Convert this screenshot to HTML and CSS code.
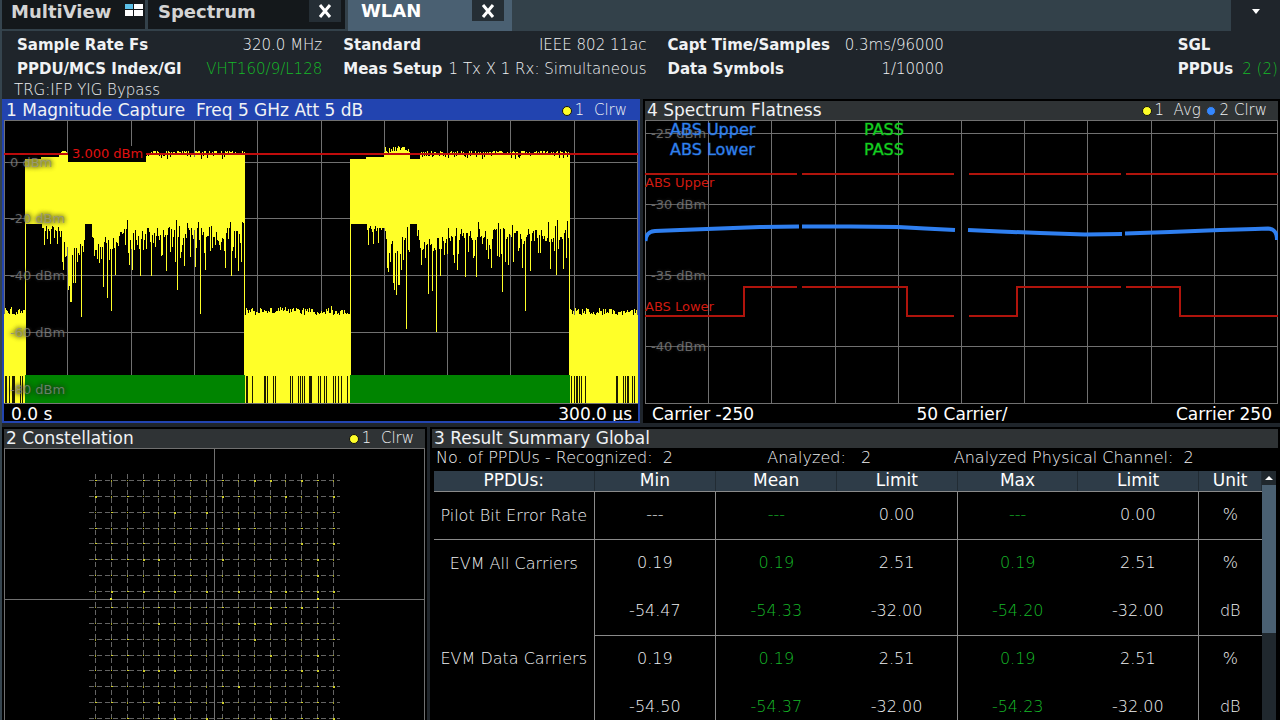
FILE: index.html
```html
<!DOCTYPE html>
<html lang="en">
<head>
<meta charset="utf-8">
<title>WLAN</title>
<link rel="stylesheet" href="styles.css">
</head>
<body>
<div class="app">
  <nav class="tabs" aria-label="Channels">
    <div class="tab tab-multi"><button class="tab-name">MultiView</button>
      <svg class="tiles" viewBox="0 0 18 12" aria-hidden="true"><path fill="#5cc0e8" d="M0 0h8v5H0z"/><path fill="#fff" d="M9 0h9v5H9zM0 6h8v6H0zM9 6h9v6H9z"/></svg>
    </div>
    <div class="tab tab-spectrum"><button class="tab-name">Spectrum</button><button class="close" aria-label="Close Spectrum"><svg viewBox="0 0 14 14"><path d="M2 1l10 12M12 1L2 13"/></svg></button></div>
    <div class="tab tab-wlan"><button class="tab-name">WLAN</button><button class="close" aria-label="Close WLAN"><svg viewBox="0 0 14 14"><path d="M2 1l10 12M12 1L2 13"/></svg></button></div>
    <button class="more" aria-label="More channels"><svg viewBox="0 0 8 5"><path d="M0 0h8L4 5z"/></svg></button>
  </nav>

  <header class="status">
    <div class="params">
      <div class="param"><b>Sample Rate Fs</b><span>320.0 MHz</span></div>
      <div class="param"><b>Standard</b><span>IEEE 802 11ac</span></div>
      <div class="param"><b>Capt Time/Samples</b><span>0.3ms/96000</span></div>
      <div class="param last"><b>SGL</b></div>
      <div class="param"><b>PPDU/MCS Index/GI</b><span class="ok">VHT160/9/L128</span></div>
      <div class="param"><b>Meas Setup</b><span>1 Tx X 1 Rx: Simultaneous</span></div>
      <div class="param"><b>Data Symbols</b><span>1/10000</span></div>
      <div class="param last"><b>PPDUs</b><span class="ok">2 (2)</span></div>
    </div>
    <div class="trigger">TRG:IFP YIG Bypass</div>
  </header>

  <main class="windows">
    <div class="row row-top">
      <section class="panel active">
        <header class="head"><h2>1 Magnitude Capture&nbsp; Freq 5 GHz Att 5 dB</h2><div class="trace"><i class="dot"></i>1&nbsp; Clrw</div></header>
        <div class="plot" id="magnitude">
          <svg viewBox="4 120 634 284" preserveAspectRatio="none" id="mag-svg"></svg>
          <span class="level">3.000 dBm</span>
          <span class="tick t0">0 dBm</span><span class="tick t20">-20 dBm</span><span class="tick t40">-40 dBm</span><span class="tick t60">-60 dBm</span><span class="tick t80">-80 dBm</span>
        </div>
        <footer class="axis"><span>0.0 s</span><span>300.0 µs</span></footer>
      </section>
      <section class="panel">
        <header class="head"><h2>4 Spectrum Flatness</h2><div class="trace"><i class="dot"></i>1&nbsp; Avg <i class="dot blue"></i>2 Clrw</div></header>
        <div class="plot">
          <svg viewBox="645 120 633 284" preserveAspectRatio="none" id="flat-svg"></svg>
          <span class="tick f25">-25 dBm</span><span class="tick f30">-30 dBm</span><span class="tick f35">-35 dBm</span><span class="tick f40">-40 dBm</span>
          <span class="limit upper">ABS Upper</span><span class="limit lower">ABS Lower</span>
          <div class="checks"><span>ABS Upper</span><span class="pass">PASS</span><span>ABS Lower</span><span class="pass">PASS</span></div>
        </div>
        <footer class="axis"><span>Carrier -250</span><span>50 Carrier/</span><span>Carrier 250</span></footer>
      </section>
    </div>

    <div class="row row-bottom">
      <section class="panel">
        <header class="head"><h2>2 Constellation</h2><div class="trace"><i class="dot"></i>1&nbsp; Clrw</div></header>
        <div class="plot fill"><svg viewBox="4 448 421 272" preserveAspectRatio="none" id="const-svg"></svg></div>
      </section>
      <section class="panel">
        <header class="head"><h2>3 Result Summary Global</h2></header>
        <div class="counts"><span>No. of PPDUs - Recognized:&nbsp; 2</span><span>Analyzed:&nbsp;&nbsp; 2</span><span>Analyzed Physical Channel:&nbsp; 2</span></div>
        <div class="results">
          <table>
            <colgroup><col class="c-name"><col><col><col><col><col><col class="c-unit"></colgroup>
            <thead><tr><th>PPDUs:</th><th>Min</th><th>Mean</th><th>Limit</th><th>Max</th><th>Limit</th><th>Unit</th></tr></thead>
            <tbody>
              <tr class="end"><th class="name">Pilot Bit Error Rate</th><td>---</td><td class="ok">---</td><td>0.00</td><td class="ok">---</td><td>0.00</td><td>%</td></tr>
              <tr><th class="name" rowspan="2">EVM All Carriers</th><td>0.19</td><td class="ok">0.19</td><td>2.51</td><td class="ok">0.19</td><td>2.51</td><td>%</td></tr>
              <tr class="end"><td>-54.47</td><td class="ok">-54.33</td><td>-32.00</td><td class="ok">-54.20</td><td>-32.00</td><td>dB</td></tr>
              <tr><th class="name" rowspan="2">EVM Data Carriers</th><td>0.19</td><td class="ok">0.19</td><td>2.51</td><td class="ok">0.19</td><td>2.51</td><td>%</td></tr>
              <tr class="end"><td>-54.50</td><td class="ok">-54.37</td><td>-32.00</td><td class="ok">-54.23</td><td>-32.00</td><td>dB</td></tr>
            </tbody>
          </table>
          <div class="scroll"><button class="up" aria-label="Scroll up"><svg viewBox="0 0 8 4"><path d="M0 4h8L4 0z"/></svg></button><div class="thumb"></div></div>
        </div>
      </section>
    </div>
  </main>
</div>
<script src="charts.js"></script>
</body>
</html>
```

FILE: styles.css
```css
* { box-sizing: border-box; }
body { margin: 0; background: #1f252b; color: #f0f2f4; font-family: "DejaVu Sans", sans-serif; font-size: 16px; }
button { border: 0; padding: 0; background: none; color: inherit; font: inherit; }
h2 { margin: 0; font-size: 17px; font-weight: 400; }
svg { display: block; }
.app { height: 100vh; display: flex; flex-direction: column; overflow: hidden; border-left: 2px solid #35444e; white-space: nowrap; }

.tabs { display: flex; height: 31px; flex: none; background: #33414a; gap: 3px; }
.tab { display: flex; height: 29px; align-items: flex-start; background: #14181b; color: #d4d4d4; font-size: 18px; font-weight: 700; line-height: 24px; }
.tab-multi { width: 143px; padding-left: 9px; gap: 14px; }
.tab-spectrum { width: 197px; padding-left: 10px; justify-content: space-between; padding-right: 4px; }
.tab-wlan { width: 164px; height: 31px; padding-left: 13px; justify-content: space-between; padding-right: 8px; background: #4a6072; color: #fff; line-height: 22px; }
.tiles { width: 18px; height: 12px; margin-top: 4px; }
.close { width: 32px; height: 22px; background: #252e35; display: flex; align-items: center; justify-content: center; }
.close svg { width: 14px; height: 14px; stroke: #fff; stroke-width: 3; fill: none; }
.tab-wlan .close { height: 21px; }
.more { width: 49px; margin-left: auto; background: #1f252b; display: flex; align-items: center; justify-content: center; padding-bottom: 8px; }
.more svg { width: 8px; height: 5px; fill: #fff; }

.status { height: 68px; flex: none; padding: 2px 0 0 15px; overflow: hidden; }
.params { display: grid; grid-template-columns: minmax(0, 305fr) minmax(0, 303fr) minmax(0, 276fr) minmax(0, 315fr); column-gap: 21px; line-height: 24px; }
.param { display: flex; justify-content: space-between; font-size: 15px; font-weight: 200; }
.param b { font-weight: 700; }
.param.last { justify-content: flex-start; gap: 9px; padding-left: 213px; }
.ok { color: #16b828; }
.trigger { margin-left: -3px; font-size: 15px; font-weight: 200; line-height: 18px; }

.windows { flex: 1; min-height: 0; display: flex; flex-direction: column; gap: 4px; }
.row { display: grid; column-gap: 3px; }
.row-top { grid-template-columns: minmax(0, 638fr) minmax(0, 637fr); }
.row-bottom { flex: 1; min-height: 0; grid-template-columns: minmax(0, 425fr) minmax(0, 850fr); }
.panel { border: 2px solid #000; background: #000; display: flex; flex-direction: column; min-height: 0; overflow: hidden; }
.row-bottom .panel { border-bottom: 0; }
.head { height: 19px; flex: none; display: flex; justify-content: space-between; align-items: center; padding: 0 11px 0 2px; background: #2f3335; line-height: 19px; }
.active { border-color: #2244b0; }
.active .head { background: #2244b0; }
.trace { display: flex; align-items: center; font-size: 15px; font-weight: 200; white-space: pre; }
.dot { width: 10px; height: 10px; margin-right: 3px; border: 1px solid #111; border-radius: 50%; background: #ffff28; }
.dot.blue { background: #3487ff; border-color: #2f3335; margin-right: 4px; }
.plot { position: relative; height: 284px; overflow: hidden; }
.plot svg { width: 100%; height: 100%; }
.plot.fill { flex: 1; height: auto; min-height: 0; }
.axis { height: 17px; display: grid; grid-auto-flow: column; grid-auto-columns: minmax(0, 1fr); align-items: center; padding: 2px 6px 0 7px; font-size: 17px; line-height: 17px; color: #fff; text-align: center; }
.axis span:first-child { text-align: left; }
.axis span:last-child { text-align: right; }

.tick, .limit, .level, .checks { position: absolute; font-size: 13px; line-height: 16px; }
.tick { left: 6px; color: #808080; text-shadow: 0 0 4px #222, 0 0 5px #222; font-weight: 400; opacity: .8; }
.t0 { top: 35px; } .t20 { top: 91px; } .t40 { top: 148px; } .t60 { top: 205px; } .t80 { top: 262px; }
.f25 { top: 6px; } .f30 { top: 77px; } .f35 { top: 148px; } .f40 { top: 219px; }
.level { left: 64px; top: 26px; width: 78px; padding-left: 4px; background: #000; color: #e01010; }
.limit { left: 0; color: #d01a10; }
.upper { top: 55px; } .lower { top: 179px; }
.checks { left: 25px; top: 0; display: grid; grid-template-columns: 194px auto; font-size: 16px; line-height: 20px; color: #3080f0; -webkit-text-stroke: 1px rgba(48, 128, 240, .4); }
.checks .pass { color: #14d020; -webkit-text-stroke-color: rgba(20, 208, 32, .4); }

.counts { height: 22px; flex: none; display: grid; grid-template-columns: 332fr 187fr 325fr; padding-left: 4px; font-size: 16px; line-height: 20px; font-weight: 200; }
.results { display: flex; padding: 1px 2px 0; flex: 1; min-height: 0; }
table { flex: 1; table-layout: fixed; border-collapse: collapse; align-self: flex-start; text-align: center; font-weight: 200; }
.c-name { width: 160px; } .c-unit { width: 63px; }
th, td { padding: 0; font-weight: inherit; }
thead th { height: 20px; font-size: 17px; line-height: 19px; font-weight: 400; color: #fff; background: #2e3c48; border-right: 1px solid #222c34; border-bottom: 1px solid #8a8a8a; }
tbody td { height: 48px; line-height: 20px; }
.name { vertical-align: top; padding-top: 14px; border-right: 1px solid #8a8a8a; line-height: 20px; }
td:nth-last-child(6), td:nth-last-child(4), td:nth-last-child(2) { border-right: 1px solid #8a8a8a; }
.end td, tbody tr:first-child > .name { border-bottom: 1px solid #8a8a8a; }
.scroll { width: 14px; background: #20282e; }
.up { width: 14px; height: 14px; display: flex; align-items: center; justify-content: center; }
.up svg { width: 8px; height: 4px; fill: #fff; }
.thumb { height: 148px; background: #4a6072; }
```

FILE: charts.js
```js
// Deterministic noise so that the traces are drawn the same way on each load.
let seed = 7;
const rnd = () => (seed = (seed * 16807) % 2147483647) / 2147483647;
const path = (d, stroke, w = 1, extra = '') => `<path d="${d}" fill="none" stroke="${stroke}" stroke-width="${w}" shape-rendering="crispEdges" ${extra}/>`;
const rect = (x, y, w, h, c) => `<rect x="${x}" y="${y}" width="${w}" height="${h}" fill="${c}" shape-rendering="crispEdges"/>`;

function gridLines(xs, ys, x0, x1, y0, y1) {
  return path(xs.map(x => `M${x}.5 ${y0}V${y1}`).join('') + ys.map(y => `M${x0} ${y}.5H${x1}`).join(''), '#707070');
}

function magnitude() {
  let out = gridLines([4, 67, 131, 194, 257, 321, 384, 447, 510, 574, 637], [120, 162, 218, 275, 332, 389], 4, 638, 120, 404);
  const spikes = new Map([[44,245],[47,239],[50,244],[54,238],[57,244],[60,237],[62,262],[63,270],[65,257],[68,290],[69,286],[70,302],[71,302],[73,283],[75,283],[77,262],[79,255],[81,317],[83,252],[97,259],[99,263],[101,259],[103,287],[107,298],[109,260],[111,311],[115,275],[118,246],[125,245],[129,265],[132,270],[137,245],[140,276],[143,250],[146,249],[151,276],[155,247],[161,256],[166,271],[170,252],[175,262],[177,290],[180,258],[184,266],[190,257],[195,267],[200,314],[205,270],[212,248],[220,250],[225,268],[231,276],[235,258],[238,271],[241,262],
    [368,245],[373,244],[378,243],[387,268],[388,272],[390,262],[393,283],[394,290],[396,295],[398,285],[399,285],[401,270],[406,329],[409,252],[421,265],[425,258],[428,294],[432,291],[436,332],[440,276],[444,255],[447,254],[454,263],[457,270],[465,277],[473,258],[476,277],[486,250],[491,268],[497,256],[502,292],[505,262],[508,265],[513,262],[522,268],[525,311],[530,271],[540,253],[550,269],[556,275],[563,269],[566,258]]);
  let cols = '';
  for (const [start, end] of [[25, 245], [350, 570]]) {
    for (let x = start; x < end; x++) {
      const k = x - start;
      let top = 151 + rnd() * rnd() * 9;
      if (k < 16) top = 159; else if (k < 34) top = 156.5 + rnd();
      else if (start === 350 && k < 60) top = 146 + rnd() * 7;
      else if (start === 350 && k < 70) top = 159;
      let bottom = 227 + rnd() * 14 + (rnd() > .65 ? rnd() * 20 : 0);
      if (k < 17 || (k > 59 && k < 67)) bottom = 224;
      else if (k < 36) bottom = 226 + rnd() * 6;
      else if (k > 38 && k < 52) bottom = 240 + rnd() * 16;
      else if (k > 69 && k < 92) bottom = 237 + rnd() * 14;
      else if (rnd() > .88) bottom = 220 + rnd() * 8;
      if (spikes.has(x)) bottom = spikes.get(x);
      cols += `M${x}.5 ${Math.round(top)}V${Math.round(bottom)}`;
    }
    cols += `M${start}.5 159V404M${end - 1}.5 155V404`;
  }
  for (const [start, end] of [[4, 25], [245, 350], [570, 638]])
    for (let x = start; x < end; x++) cols += `M${x}.5 ${Math.round(308 + rnd() * 7 - (rnd() > .94 ? 4 : 0))}V404`;
  out += path(cols, '#ffff28');
  out += rect(25, 375, 220, 29, '#008400') + rect(350, 375, 220, 29, '#008400');
  const dark = [5, 6, 9, 12, 13, 14, 20, 22, 246, 247, 252, 264, 265, 267, 273, 275, 290, 292, 298, 300, 302, 304, 309, 310, 311, 318, 320, 324, 326, 333, 335, 338, 341, 347, 571, 574, 576, 577, 579, 581, 585, 616, 617, 623, 625, 627, 628, 632, 634];
  out += path(dark.map(x => `M${x}.5 376V404`).join(''), '#1c1c00');
  out += path('M4 154H638', '#c00c0c', 2);
  out += path('M4 403.5H638', '#777');
  document.getElementById('mag-svg').innerHTML = out;
}

function flatness() {
  let out = gridLines([645, 708, 771, 835, 898, 961, 1024, 1087, 1151, 1214, 1277], [120, 133, 204, 275, 346, 403], 645, 1278, 120, 404);
  out += path('M645 174H797M802 174H954M969 174H1121M1126 174H1278M645 316H744V287H797M802 287H907V316H954M969 316H1017V287H1121M1126 287H1180V316H1278', '#b0140c', 2);
  out += '<g fill="none" stroke="#2f7ff0" stroke-width="4"><path d="M645.5 241C646 235 648 231.500 655 231L680 230L720 228.500L760 227L799 226.500"/><path d="M802 226.500L850 226.500L898 227L925 228.500L955 230"/><path d="M968 230L1000 231.500L1040 233L1085 234.500L1122 234"/><path d="M1125 233.500L1170 232L1220 230L1255 229L1268 228.500C1274 229 1277 232 1277 240"/></g>';
  document.getElementById('flat-svg').innerHTML = out;
}

function constellation() {
  let out = path('M214.500 448V720M4 599.500H425M4.500 448V720M424.500 448V720M4 448.500H425', '#707070');
  const xs = [], ys = [];
  for (let i = 0; i < 16; i++) { xs.push(Math.round(95 + i * 15.87)); ys.push(Math.round(480 + i * 15.87)); }
  out += path(xs.map(x => `M${x}.5 474V720`).join(''), '#646464', 1, 'stroke-dasharray="5 3"');
  out += path(ys.map(y => `M89 ${y}.5H340`).join(''), '#646464', 1, 'stroke-dasharray="5 3"');
  for (const y of ys) for (const x of xs) {
    const v = rnd();
    out += rect(x, y, v > .5 ? 2 : 1, v > .8 || v < .25 ? 2 : 1, v > .4 ? '#d0d028' : '#a4a42a');
  }
  out += rect(110, 598, 2, 2, '#f0f030') + rect(317, 598, 2, 2, '#f0f030');
  document.getElementById('const-svg').innerHTML = out;
}

magnitude();
flatness();
constellation();
```
